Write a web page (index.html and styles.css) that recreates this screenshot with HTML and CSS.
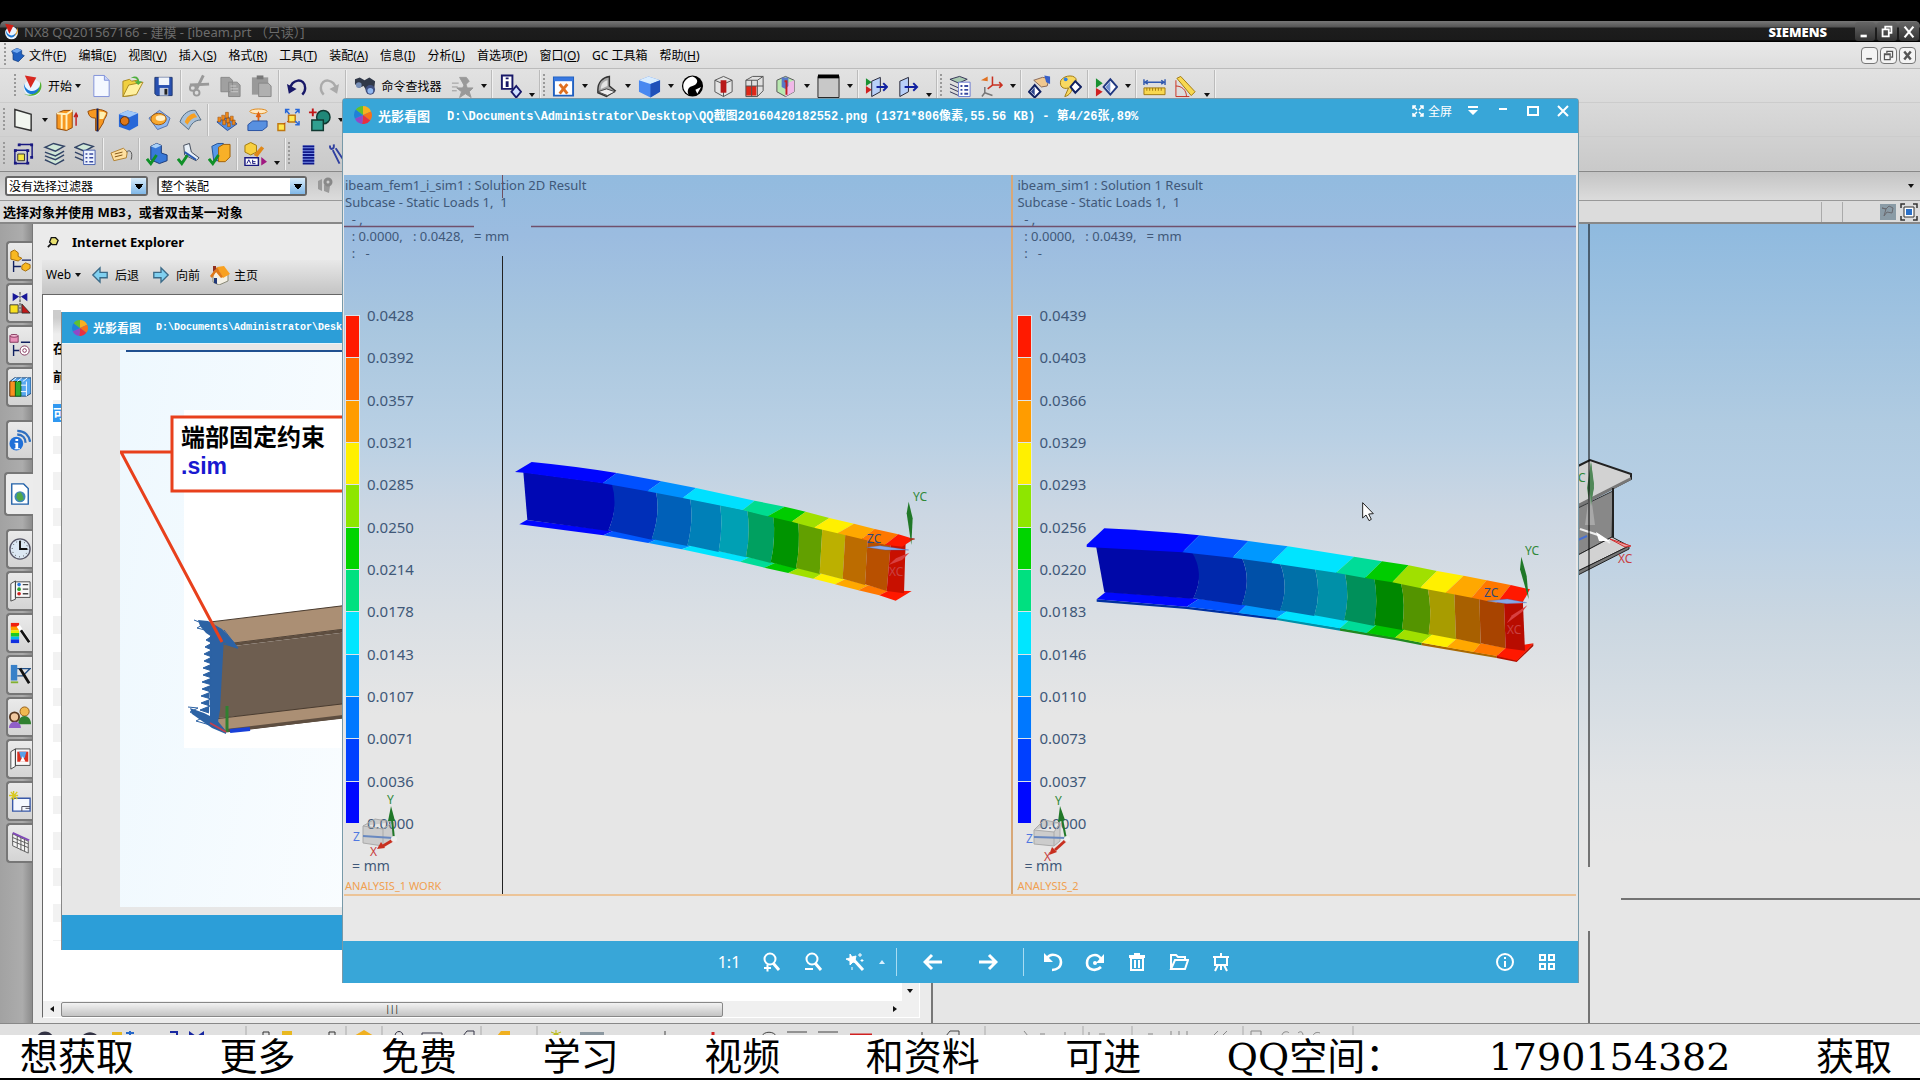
FILE: index.html
```html
<!DOCTYPE html>
<html lang="zh-CN">
<head>
    <meta charset="UTF-8">
    <meta name="viewport" content="width=device-width, initial-scale=1.0">
    <title>NX8 - ibeam.prt</title>
    <link rel="stylesheet" href="styles.css">
</head>
<body>
<div class="app">
    <header class="titlebar">
        <svg class="logo" viewBox="0 0 24 24"><circle cx="12" cy="14" r="9" fill="#e8f4ff"/><path d="M4 18c8 4 17-2 16-12 4 9-5 18-16 12z" fill="#f0a020"/><path d="M4 10c2 8 10 10 14 4-1 9-14 9-14-4z" fill="#1878d8"/><path d="M3 1l12 2-6 12z" fill="#d02018"/></svg>
        <span class="app-name">NX8 QQ201567166 - 建模 - [ibeam.prt （只读）]</span>
        <span class="brand">SIEMENS</span>
        <div class="win-buttons">
            <button aria-label="最小化"><svg viewBox="0 0 18 18"><path d="M4 12h7v3H4z" fill="#fff"/></svg></button>
            <button aria-label="还原"><svg viewBox="0 0 18 18"><path d="M7 6V3h7v7h-3M4 6h7v8H4z" fill="none" stroke="#fff" stroke-width="2"/></svg></button>
            <button aria-label="关闭"><svg viewBox="0 0 18 18"><path d="M4 3l10 12M14 3L4 15" stroke="#fff" stroke-width="2.4"/></svg></button>
        </div>
    </header>

    <nav class="menubar">
        <i class="grip"></i>
        <svg class="menu-logo" viewBox="0 0 24 24"><path d="M4 6l8-4 7 3v6l4 2-9 9-8-3V11z" fill="#2060c0" stroke="#103878"/><path d="M4 6l8-4 7 3-7 4z" fill="#70a8f0"/></svg>
        <a href="#">文件(<u>F</u>)</a>
        <a href="#">编辑(<u>E</u>)</a>
        <a href="#">视图(<u>V</u>)</a>
        <a href="#">插入(<u>S</u>)</a>
        <a href="#">格式(<u>R</u>)</a>
        <a href="#">工具(<u>T</u>)</a>
        <a href="#">装配(<u>A</u>)</a>
        <a href="#">信息(<u>I</u>)</a>
        <a href="#">分析(<u>L</u>)</a>
        <a href="#">首选项(<u>P</u>)</a>
        <a href="#">窗口(<u>O</u>)</a>
        <a href="#">GC 工具箱</a>
        <a href="#">帮助(<u>H</u>)</a>
        <div class="mdi-buttons">
            <button aria-label="最小化文档"><svg viewBox="0 0 16 16"><path d="M4 11h7v2H4z" fill="#555"/></svg></button>
            <button aria-label="还原文档"><svg viewBox="0 0 16 16"><path d="M6 5V3h7v7h-2M3 6h7v7H3zM3 7h7" fill="none" stroke="#555" stroke-width="1.5"/></svg></button>
            <button aria-label="关闭文档"><svg viewBox="0 0 16 16"><path d="M4 3l8 10M12 3L4 13" stroke="#555" stroke-width="3"/></svg></button>
        </div>
    </nav>

    <div class="toolbars">
        <div class="toolbar first">
            <i class="grip"></i>
            <button class="tool start"><svg viewBox="0 0 24 24"><circle cx="12" cy="14" r="9" fill="#e8f4ff"/><path d="M3 20c9 4 18-4 17-13 5 9-5 20-17 13z" fill="#50b030"/><path d="M3 9c2 9 11 11 16 4-1 10-16 11-16-4z" fill="#1878d8"/><path d="M4 1l12 2-6 11z" fill="#d82820"/></svg>开始<b class="arrow"></b></button>
            <button class="tool" aria-label="新建"><svg viewBox="0 0 24 24"><path d="M4 1h11l5 5v17H4z" fill="#f4f8ff" stroke="#8090d8"/><path d="M15 1v5h5" fill="#c8d4f8" stroke="#8090d8"/></svg></button>
            <button class="tool" aria-label="打开"><svg viewBox="0 0 24 24"><path d="M2 7l7-2 2 2 6-1v5l-5 11-10 1z" fill="#f0d040" stroke="#a88820"/><path d="M2 23l6-12 15-3-7 13z" fill="#fff0a0" stroke="#a88820"/><path d="M10 4c5-4 9-1 9 3h3l-4 4-4-4h3c0-3-3-4-7-3z" fill="#50b040"/></svg></button>
            <button class="tool" aria-label="保存"><svg viewBox="0 0 24 24"><path d="M3 3h18v19H5l-2-2z" fill="#2850b0" stroke="#203870"/><path d="M7 3h11v8H7z" fill="#f0f4fa"/><path d="M8 14h9v8H8z" fill="#c8d0e0"/><path d="M13 15h3v6h-3z" fill="#222"/></svg></button>
            <i class="sep"></i>
            <button class="tool" aria-label="剪切"><svg viewBox="0 0 24 24"><path d="M16 1L9 15M2 11l20-1" stroke="#999" stroke-width="3"/><circle cx="5" cy="14" r="3" fill="none" stroke="#999" stroke-width="2"/><circle cx="9" cy="19" r="3" fill="none" stroke="#999" stroke-width="2"/></svg></button>
            <button class="tool" aria-label="复制"><svg viewBox="0 0 24 24"><path d="M2 3h9l3 3v12H2zM10 8h9l3 3v12H10z" fill="#a0a0a0" stroke="#888"/><path d="M12 12h6m-6 3h8m-8 3h8" stroke="#ccc"/></svg></button>
            <button class="tool" aria-label="粘贴"><svg viewBox="0 0 24 24"><path d="M2 3h17v18H2z" fill="#999"/><path d="M7 1h7v4H7z" fill="#777"/><path d="M9 9h10l3 3v11H9z" fill="#b0b0b0" stroke="#888"/></svg></button>
            <i class="sep"></i>
            <button class="tool" aria-label="撤消"><svg viewBox="0 0 24 24"><path d="M4 16C5 4 20 3 20 14c0 3-1 5-3 7" fill="none" stroke="#181868" stroke-width="2.5"/><path d="M1 10l2 10 8-5z" fill="#181868"/></svg></button>
            <button class="tool" aria-label="重做"><svg viewBox="0 0 24 24"><path d="M20 16C19 4 4 3 4 14c0 3 1 5 3 7" fill="none" stroke="#aaa" stroke-width="2.5"/><path d="M23 10l-2 10-8-5z" fill="#aaa"/></svg></button>
            <i class="sep"></i>
            <button class="tool finder"><svg viewBox="0 0 24 24"><path d="M1 5l5-2 5 3 5-3 6 4-1 9-6 4-5-8-5 2-4-4z" fill="#303848"/><circle cx="17" cy="16" r="5" fill="#405080"/><circle cx="17" cy="17" r="3" fill="#90b8f0"/><circle cx="5" cy="11" r="3" fill="#7890b8"/></svg>命令查找器</button>
            <button class="tool" aria-label="收藏"><svg viewBox="0 0 24 24"><path d="M9 3h7l3 4-5 5zM15 9l2 5h6l-4 4 2 6-6-4-6 4 2-6-5-4h6zM1 9h7M1 13h6M1 17h5" fill="#999" stroke="#999"/></svg></button>
            <b class="arrow"></b>
            <i class="sep"></i>
            <button class="tool" aria-label="信息"><svg viewBox="0 0 24 24"><path d="M3 1h11v14H3z" fill="#fff" stroke="#181868" stroke-width="2"/><path d="M7 3h3v2H7zM7 7h3v6H7z" fill="#181868"/><path d="M13 18l5-6 5 6-5 6z" fill="#d0e0ff" stroke="#181868" stroke-width="2"/></svg></button>
            <b class="arrow low"></b>
            <i class="sep"></i><i class="grip"></i>
            <button class="tool" aria-label="适合窗口"><svg viewBox="0 0 24 24"><path d="M2 3h20v19H2z" fill="#fff" stroke="#2060c0" stroke-width="2"/><path d="M2 3h20v4H2z" fill="#3878e0"/><path d="M8 10l8 10M16 10L8 20" stroke="#e07020" stroke-width="3"/></svg></button>
            <b class="arrow"></b>
            <button class="tool" aria-label="渲染"><svg viewBox="0 0 24 24"><path d="M3 16C3 8 8 3 15 2v10l6 5-9 6-9-4z" fill="#a8a8a8" stroke="#333" stroke-width="1.5"/><path d="M6 15c0-5 3-8 7-9v6z" fill="#e4e4e4"/><path d="M3 18l9-3 9 3-8 4z" fill="#eee" stroke="#444"/></svg></button>
            <b class="arrow"></b>
            <button class="tool" aria-label="着色"><svg viewBox="0 0 24 24"><path d="M1 6l10-4 12 4v12l-10 6-12-6z" fill="#4888f0"/><path d="M1 6l10-4 12 4-10 4z" fill="#d8ecff"/><path d="M13 10l10-4v12l-10 6z" fill="#2050b8"/></svg></button>
            <b class="arrow"></b>
            <button class="tool" aria-label="球面"><svg viewBox="0 0 24 24"><circle cx="12" cy="12" r="11" fill="#000"/><path d="M12 2c8 3 5 9 0 10s-6 6-4 9c-9-5-7-17 4-19zM15 16l6-3-4 7z" fill="#fff"/></svg></button>
            <button class="tool" aria-label="截面"><svg viewBox="0 0 24 24"><path d="M3 6l9-4 9 4v12l-9 5-9-5zM3 6l9 4 9-4M12 10v13" fill="#e4e4e4" stroke="#555"/><path d="M9 6h6v13H9z" fill="#b81818"/></svg></button>
            <button class="tool" aria-label="剪切截面"><svg viewBox="0 0 24 24"><path d="M3 6l7-4h11v15l-6 6H3z" fill="#e0e0e0"/><path d="M3 12h11v10H3z" fill="#e02818"/><path d="M3 6l7-4h11v15l-6 6H3zM3 6h12v17M15 6l6-4M9 6v17M3 12h18" fill="none" stroke="#555"/></svg></button>
            <button class="tool" aria-label="彩色立方"><svg viewBox="0 0 24 24"><path d="M3 6l9-4 9 4v12l-9 5-9-5z" fill="#b8e8b0" stroke="#555"/><path d="M12 10l9-4v12l-9 5z" fill="#f0b8e8"/><path d="M8 3h7v9l-3 3-4-2z" fill="#5878c8"/><path d="M11 7h2v14" fill="none" stroke="#c02020" stroke-width="2"/></svg></button>
            <b class="arrow"></b>
            <button class="tool" aria-label="背景"><svg viewBox="0 0 24 24"><path d="M1 2h22v22H1z" fill="#c8c8c8" stroke="#222"/><path d="M1 0h22v4H1z"/></svg></button>
            <b class="arrow"></b>
            <i class="sep"></i>
            <button class="tool" aria-label="编辑截面"><svg viewBox="0 0 24 24"><path d="M1 4l6 4-6 4z" fill="#189030"/><path d="M1 12l6 4-6 4z" fill="#d02020"/><path d="M7 7l9-4v15l-9 5z" fill="#b8d0f8" stroke="#223"/><path d="M12 13h10M19 9l4 4-4 4" fill="none" stroke="#1020a0" stroke-width="2"/></svg></button>
            <button class="tool" aria-label="剪切工作截面"><svg viewBox="0 0 24 24"><path d="M4 7l9-4v15l-9 5z" fill="#b8d0f8" stroke="#223"/><path d="M9 13h12M18 9l4 4-4 4" fill="none" stroke="#1020a0" stroke-width="2"/></svg></button>
            <b class="arrow low"></b>
            <i class="sep"></i><i class="grip"></i>
            <button class="tool" aria-label="图层"><svg viewBox="0 0 24 24"><path d="M1 5l10-3 8 3-9 4zM1 10l9 4M1 14l9 4M1 18l9 4" fill="#a8c8b0" stroke="#335"/><path d="M10 8h12v15H10z" fill="#fff" stroke="#6878d0"/><path d="M12 12h2m2 0h4m-8 4h2m2 0h4m-8 4h2m2 0h4" stroke="#3848a0" stroke-width="2"/></svg></button>
            <button class="tool" aria-label="坐标系"><svg viewBox="0 0 24 24"><path d="M13 2v9h9M13 11l-5 4M20 8l3 3-3 3" fill="none" stroke="#c83020" stroke-width="1.6"/><path d="M5 13v6l-3 4m3-4l8 3" fill="none" stroke="#777" stroke-width="1.6"/><path d="M1 6l7-4v5z" fill="#e07020"/></svg></button>
            <b class="arrow"></b>
            <i class="sep"></i>
            <button class="tool" aria-label="选择"><svg viewBox="0 0 24 24"><path d="M6 6l9-3 7 1-2 8-6 1z" fill="#f0c890" stroke="#865"/><path d="M17 1l6 1v8l-4-2z" fill="#3860c8"/><path d="M1 18l6-7 6 7-6 6z" fill="#fff" stroke="#102060" stroke-width="2"/><path d="M7 13v9l-4-4z" fill="#304890"/></svg></button>
            <button class="tool" aria-label="对象显示"><svg viewBox="0 0 24 24"><path d="M2 6c4-6 16-6 16 0 0 4-4 3-4 7s-3 9-8 10l4-9c-6 2-10-2-8-8z" fill="#f8d860" stroke="#a07810"/><circle cx="7" cy="5" r="2" fill="#3080e0"/><path d="M12 13l5-6 6 6-6 6z" fill="#fff" stroke="#102060" stroke-width="2"/></svg></button>
            <i class="sep"></i>
            <button class="tool" aria-label="显示隐藏"><svg viewBox="0 0 24 24"><path d="M1 4l7 5-7 5z" fill="#189030"/><path d="M1 14l7 4-7 5z" fill="#d02020"/><path d="M9 13l7-8 7 8-7 8z" fill="#fff" stroke="#203880" stroke-width="2"/><path d="M16 7v12l-5-6z" fill="#7090d0"/></svg></button>
            <b class="arrow"></b>
            <i class="sep"></i>
            <button class="tool" aria-label="测量距离"><svg viewBox="0 0 24 24"><path d="M1 14h22v7H1z" fill="#f8d850" stroke="#a07810"/><path d="M4 14v3m3-3v3m3-3v3m3-3v3m3-3v3m3-3v3" stroke="#a07810"/><path d="M1 8h22M1 5v6M23 5v6M5 6L2 8l3 2M19 6l3 2-3 2" stroke="#3058b0" fill="none" stroke-width="1.5"/></svg></button>
            <button class="tool" aria-label="测量角度"><svg viewBox="0 0 24 24"><path d="M3 4l4-2 15 16-4 4z" fill="#f8d850" stroke="#a07810"/><path d="M2 6v17h14M2 12c6 0 11 4 11 11" fill="none" stroke="#c83020"/></svg></button>
            <b class="arrow low"></b>
            <i class="sep"></i>
        </div>
        <div class="toolbar">
            <i class="grip"></i>
            <button class="tool" aria-label="草图"><svg viewBox="0 0 24 24"><path d="M3 1l17 5v17L3 19z" fill="#f2f6f0" stroke="#333" stroke-width="1.5"/></svg></button>
            <b class="arrow"></b>
            <button class="tool" aria-label="拉伸"><svg viewBox="0 0 24 24"><path d="M2 5l7-3h9v18l-6 3-10-2z" fill="#f89820" stroke="#904808"/><path d="M7 6v15M12 6v16M2 5l10 1 6-4" stroke="#fff0c0" fill="none" stroke-width="2"/><path d="M22 18V6m-2 3l2-4 2 4" fill="none" stroke="#c02020" stroke-width="1.5"/></svg></button>
            <button class="tool" aria-label="回转"><svg viewBox="0 0 24 24"><path d="M2 3c7-3 14-3 20 1-1 7-3 5-4 11l-5 8h-3V10C5 10 3 8 2 3z" fill="#f89820" stroke="#904808"/><path d="M12 0v24" stroke="#102060" stroke-width="2"/><path d="M14 3c4 0 6 1 7 2l-3 6h-4z" fill="#fff0b0"/></svg></button>
            <button class="tool" aria-label="孔"><svg viewBox="0 0 24 24"><path d="M2 6l9-4 11 3v13l-9 5-11-4z" fill="#2868d8"/><path d="M2 6l9-4 11 3-9 4z" fill="#a0c8f8"/><circle cx="8" cy="13" r="4.500" fill="#e07818" stroke="#603008"/></svg></button>
            <button class="tool" aria-label="凸台"><svg viewBox="0 0 24 24"><path d="M1 10l11-8 11 8-3 8-10 4z" fill="#90b8f0" stroke="#5070b0"/><ellipse cx="11" cy="11" rx="8" ry="6" fill="#f8a830" stroke="#a05808"/><ellipse cx="13" cy="10" rx="5" ry="3" fill="#fff0c8"/></svg></button>
            <button class="tool" aria-label="扫掠"><svg viewBox="0 0 24 24"><path d="M1 14C4 5 11 1 17 2l6 10c-7 0-10 4-13 10z" fill="#a8c0d8" stroke="#506880"/><path d="M9 17c2-5 6-8 10-8l-3-4c-5 1-8 4-10 9z" fill="#f8a020"/></svg></button>
            <i class="sep"></i>
            <button class="tool" aria-label="阵列"><svg viewBox="0 0 24 24"><path d="M2 14l12-5 9 7-10 7z" fill="#5890e0" stroke="#2850a0"/><path d="M3 9h3v5H3zM7 7h3v5H7zM11 4h3v6h-3zM8 12h3v5H8zM12 10h3v5h-3zM16 8h3v5h-3zM13 15h3v4h-3zM18 12h3v5h-3z" fill="#f08818" stroke="#904808" stroke-width=".5"/></svg></button>
            <button class="tool" aria-label="拔模"><svg viewBox="0 0 24 24"><ellipse cx="13" cy="3" rx="9" ry="2.500" fill="#ffe8c0" stroke="#e08818"/><path d="M13 15V6m-2 3l2-4 2 4" stroke="#e06010" fill="none" stroke-width="1.800"/><path d="M2 17l5-4h15v6l-5 4H2z" fill="#5890e0" stroke="#2850a0"/></svg></button>
            <button class="tool" aria-label="移动"><svg viewBox="0 0 24 24"><path d="M1 16h7v7H1zM12 7h7v7h-7z" fill="#ffe850" stroke="#c07810" stroke-width="1.500"/><path d="M7 16l5-3" stroke="#c04010" stroke-dasharray="2"/><path d="M13 6L9 1m0 4V1h4M19 13l4 4m0-4v4h-4M19 5l4-4m-4 0h4v4" stroke="#2868d8" fill="none" stroke-width="1.500"/></svg></button>
            <button class="tool" aria-label="求和"><svg viewBox="0 0 24 24"><path d="M1 4h8M5 0v8" stroke="#c01818" stroke-width="2"/><circle cx="16" cy="9" r="7" fill="#208878" stroke="#103830" stroke-width="1.500"/><path d="M4 12h12v11H4z" fill="#30a090" stroke="#103830" stroke-width="1.500"/></svg></button>
            <b class="arrow"></b>
        </div>
        <div class="toolbar">
            <i class="grip"></i>
            <button class="tool" aria-label="选择组件"><svg viewBox="0 0 24 24"><path d="M7 2h14v14M3 8h13v14H3z" fill="none" stroke="#181880" stroke-width="1.500"/><path d="M6 12h7v7H6z" fill="#f8e840" stroke="#333"/><path d="M2 7h3v3H2zM15 7h3v3h-3zM2 20h3v3H2zM15 20h3v3h-3zM6 1h3v3H6zM19 1h3v3h-3zM19 14h3v3h-3z" fill="#181880"/></svg></button>
            <button class="tool" aria-label="层设置"><svg viewBox="0 0 24 24"><path d="M2 5l9-4 11 3-9 5zM2 10l11 4 9-5M2 14l11 4 9-5M2 18l11 5 9-5" fill="#d0e8d8" stroke="#346" stroke-width="1.500"/></svg></button>
            <button class="tool" aria-label="层视图"><svg viewBox="0 0 24 24"><path d="M1 5l9-4 10 3-9 5zM1 10l9 4M1 15l9 4" fill="#d0e8d8" stroke="#346" stroke-width="1.500"/><path d="M10 8h12v15H10z" fill="#eef4ff" stroke="#4860b0"/><path d="M12 12h2m2 0h4m-8 4h2m2 0h4m-8 4h2m2 0h4" stroke="#3848a0" stroke-width="1.500"/></svg></button>
            <i class="sep"></i>
            <button class="tool" aria-label="标签"><svg viewBox="0 0 24 24"><path d="M1 11l13-5 4 4-1 6-13 3z" fill="#ffe0a0" stroke="#b08030"/><path d="M5 12l8-2M5 15l8-2" stroke="#805010"/><path d="M17 10c5-4 7 2 5 8" fill="none" stroke="#555"/></svg></button>
            <i class="sep"></i>
            <button class="tool" aria-label="检查几何体"><svg viewBox="0 0 24 24"><path d="M5 4l6-3 5 2v8l6 2v6l-8 3-9-4z" fill="#3878d8" stroke="#183878"/><path d="M5 4l6-3 5 2-6 3z" fill="#a8d0f8"/><path d="M1 17l4 5 6-9" fill="none" stroke="#109028" stroke-width="3"/></svg></button>
            <button class="tool" aria-label="检查部件"><svg viewBox="0 0 24 24"><path d="M7 3l6-2 2 9 8 6-3 3-12-6z" fill="#e8f0f8" stroke="#404858"/><path d="M1 17l4 5 6-9" fill="none" stroke="#109028" stroke-width="3"/><path d="M8 10l12 8" stroke="#2858b0" stroke-width="2"/></svg></button>
            <button class="tool" aria-label="检查装配"><svg viewBox="0 0 24 24"><path d="M4 4l6-3h6v18H6z" fill="#5898e8" stroke="#205098"/><path d="M11 5l5-3h7v13l-5 5h-7z" fill="#f8b028" stroke="#a06008"/><path d="M1 17l4 5 6-9" fill="none" stroke="#109028" stroke-width="3"/></svg></button>
            <i class="sep"></i>
            <button class="tool" aria-label="重命名"><svg viewBox="0 0 24 24"><path d="M1 3l6-3 6 3v7l-6 3-6-3z" fill="#f8d040" stroke="#a07808"/><path d="M10 13l8-9 3 2-7 9z" fill="#e08818"/><path d="M1 16h14v8H1z" fill="#fff" stroke="#181880" stroke-width="1.500"/><path d="M3 22l2-4 2 4m2-4v4h3m-3-2h3" stroke="#181880" fill="none"/><path d="M18 15l6 5-6 4z" fill="#a01880"/></svg></button>
            <b class="arrow low"></b>
            <i class="sep"></i><i class="grip"></i>
            <button class="tool" aria-label="弹簧"><svg viewBox="0 0 24 24"><path d="M6 3h12v19H6z" fill="#7890e8"/><path d="M6 4h12M6 7h12M6 10h12M6 13h12M6 16h12M6 19h12M6 22h12" stroke="#101888" stroke-width="2"/></svg></button>
            <button class="tool" aria-label="螺纹"><svg viewBox="0 0 24 24"><path d="M2 3c0 6 5 4 4-1M5 8l7 14M8 6l8 12" stroke="#3040a0" stroke-width="2" fill="none"/></svg></button>
        </div>
    </div>

    <div class="filterbar">
        <label class="combo filter-type"><select aria-label="类型过滤器"><option>没有选择过滤器</option></select></label>
        <label class="combo filter-scope"><select aria-label="选择范围"><option>整个装配</option></select></label>
        <svg class="gears" viewBox="0 0 18 18"><path d="M2 4l4-2v12l-4-2zM8 8l6 1-1 7-5-2z" fill="#999"/><circle cx="12" cy="5" r="3" fill="none" stroke="#888" stroke-width="3"/></svg>
        <b class="arrow"></b>
    </div>
    <div class="prompt">
        <span>选择对象并使用 MB3，或者双击某一对象</span>
        <div class="status"><i></i><i></i>
            <svg viewBox="0 0 18 18"><path d="M1 1h16v16H1z" fill="#8a9ba6"/><path d="M3 5l4 1 3-3 4 2-1 5-5-1-3 4 2-7z" fill="none" stroke="#6a6a70"/></svg>
            <svg viewBox="0 0 18 18"><path d="M1 5V1h4M13 1h4v4M17 13v4h-4M5 17H1v-4" fill="none" stroke="#333" stroke-width="1.500"/><path d="M4 4h10v10H4z" fill="#fff" stroke="#333"/><path d="M6 6h6v6H6z" fill="#2a70c8"/></svg>
        </div>
    </div>

    <main class="workspace">
        <aside class="tabs">
            <button aria-label="装配导航器"><svg viewBox="0 0 24 24"><path d="M2 2l4-2 4 3v4l4 2-4 3-8-2z" fill="#f8b820" stroke="#a06808"/><path d="M5 12v12M5 18h8M14 11h10" stroke="#102060" stroke-width="1.500"/><path d="M14 17l4-3 5 2v4l-5 3-4-2z" fill="#f8b820" stroke="#a06808"/></svg></button>
            <button aria-label="约束导航器"><svg viewBox="0 0 24 24"><path d="M4 1v9l7-5zM20 1v9l-7-5z" fill="#181898"/><path d="M12 0v24" stroke="#222" stroke-dasharray="3 1"/><path d="M1 14h9v9H1z" fill="#f8e020" stroke="#333"/><path d="M14 13v10h9z" fill="#c01818" stroke="#333"/></svg></button>
            <button aria-label="部件导航器"><svg viewBox="0 0 24 24"><path d="M1 2h9v7H1z" fill="#e890b8" stroke="#803058"/><ellipse cx="5.500" cy="2" rx="4.500" ry="1.500" fill="#f8c0d8" stroke="#803058"/><path d="M5 12v12M5 18h6M13 9h10" stroke="#102060" stroke-width="1.500"/><circle cx="17" cy="18" r="5" fill="#fff" stroke="#803058"/><circle cx="17" cy="18" r="2" fill="none" stroke="#803058"/></svg></button>
            <button aria-label="重用库"><svg viewBox="0 0 24 24"><path d="M1 6l5-4h18v17l-5 3H1z" fill="#58a8f0" stroke="#204878"/><path d="M1 6h6v16H1z" fill="#f89020" stroke="#804008"/><path d="M7 6h6v16H7z" fill="#30b030" stroke="#106010"/><path d="M19 6v16M13 10h6M13 17h6M3 6l5-4M9 6l5-4M15 6l5-4" stroke="#fff"/></svg></button>
            <button class="gap" aria-label="HD3D 工具"><svg viewBox="0 0 24 24"><circle cx="8" cy="16" r="7.500" fill="#2070d8"/><path d="M7 11h3v2H7zM6 15h4v6h2v1H6v-1h1v-5H6z" fill="#fff"/><path d="M9 6c6 0 9 4 9 9M9 2c9 0 13 6 14 12" fill="none" stroke="#3070c0" stroke-width="2.500"/></svg></button>
            <button class="gap current" aria-label="Internet Explorer"><svg viewBox="0 0 24 24"><path d="M3 1h13l5 5v17H3z" fill="#fff" stroke="#2060a8" stroke-width="1.500"/><circle cx="12" cy="15" r="6" fill="#4088b8"/><path d="M9 11l4-1 2 4 1 4-5 2-3-4z" fill="#50a848"/></svg></button>
            <button class="gap" aria-label="历史记录"><svg viewBox="0 0 24 24"><circle cx="12" cy="12" r="11" fill="#dce8f4" stroke="#556" stroke-width="1.500"/><path d="M12 3v9h8" stroke="#111" stroke-width="2" fill="none"/><circle cx="12" cy="12" r="8.500" fill="none" stroke="#333" stroke-dasharray="1 3.450"/></svg></button>
            <button aria-label="系统材料"><svg viewBox="0 0 24 24"><path d="M2 4l5-3v20l-5 2zM7 2h16v17H7z" fill="#f8f8f8" stroke="#444"/><circle cx="11" cy="5" r="2" fill="#2878e0"/><circle cx="11" cy="10" r="2" fill="#30a030"/><circle cx="11" cy="15" r="2" fill="#d02020"/><path d="M15 5h6m-6 5h6m-6 5h6" stroke="#444" stroke-width="1.500"/></svg></button>
            <button aria-label="后处理向导"><svg viewBox="0 0 24 24"><path d="M2 1h9v5H2z" fill="#f02010"/><path d="M2 5h9v4H2z" fill="#ff9c00"/><path d="M2 9h9v3H2z" fill="#e8f000"/><path d="M2 12h9v4H2z" fill="#20c820"/><path d="M2 16h9v3H2z" fill="#00b8f0"/><path d="M2 19h9v4H2z" fill="#1030e0"/><path d="M10 4l12 18" stroke="#fff" stroke-width="4"/><path d="M13 9l9 13" stroke="#111" stroke-width="3"/></svg></button>
            <button aria-label="仿真向导"><svg viewBox="0 0 24 24"><path d="M2 1h7v17H2z" fill="#3880c8"/><path d="M9 5h14l-8 8H9" fill="none" stroke="#205088" stroke-width="1.500"/><path d="M12 5l10 16" stroke="#111" stroke-width="3"/><path d="M2 20h8" stroke="#80b030" stroke-width="2"/></svg></button>
            <button aria-label="角色"><svg viewBox="0 0 24 24"><circle cx="17" cy="6" r="5" fill="#f0b850" stroke="#905810"/><path d="M10 20c0-12 14-12 14 0z" fill="#308030"/><circle cx="6" cy="12" r="5" fill="#f0c8a0" stroke="#583820" stroke-width="2"/><path d="M0 24c0-9 13-9 13 0z" fill="#9060c8"/></svg></button>
            <button aria-label="场景"><svg viewBox="0 0 24 24"><path d="M2 4l5-3v19l-5 3zM7 1h16v18H7z" fill="#f8f8f8" stroke="#444"/><path d="M9 4h12v11H9z" fill="#d83020"/><path d="M11 4h8l-2 7h-4z" fill="#58a0e8"/><path d="M12 15l3-6 3 6z" fill="#fff"/></svg></button>
            <button aria-label="新建图纸"><svg viewBox="0 0 24 24"><path d="M4 9h19v14H4z" fill="#f4f8ff" stroke="#3858a8" stroke-width="1.500"/><path d="M14 18h9M14 18v5M18 20h5" stroke="#445"/><path d="M5 1v10M0 6h10M2 2l7 8M9 2L2 10" stroke="#d8c820" stroke-width="1.500"/></svg></button>
            <button aria-label="表格"><svg viewBox="0 0 24 24"><path d="M4 2l17 8v13L4 15z" fill="#f4f4f4" stroke="#555"/><path d="M4 6l17 7M4 10l17 7M9 4v13M13 6v14M17 8v13" stroke="#555"/><path d="M4 1l18 8" stroke="#8048b8" stroke-width="2"/></svg></button>
        </aside>

        <section class="browser">
            <h2><svg viewBox="0 0 14 14"><path d="M5 2h5l3 3-2 5H6L3 7z" fill="#e8e070" stroke="#111" stroke-width="1.500"/><path d="M1 13l4-4" stroke="#111" stroke-width="2"/></svg>Internet Explorer</h2>
            <div class="browser-bar">
                <button>Web<b class="arrow"></b></button>
                <button><svg viewBox="0 0 20 20"><path d="M2 10l8-8v5h8v6h-8v5z" fill="#80d0f0" stroke="#3a6a88" stroke-width="1.500"/></svg>后退</button>
                <button><svg viewBox="0 0 20 20"><path d="M18 10l-8-8v5H2v6h8v5z" fill="#80d0f0" stroke="#3a6a88" stroke-width="1.500"/></svg>向前</button>
                <button class="home"><svg viewBox="0 0 20 20"><path d="M3 10l5-6 10 4v8l-9 4-6-3z" fill="#f4f0e4" stroke="#887"/><path d="M7 2l7-1 6 8-7 4z" fill="#f8a020"/><path d="M0 11L7 2l6 10-2 1-5-6-4 6z" fill="#e07818"/><path d="M4 13h3v6l-3-1z" fill="#203878"/><path d="M3 1h3v3L3 7z" fill="#903020"/></svg>主页</button>
            </div>
            <div class="page">
                <div class="page-body">
                    <div class="strip"><p>在</p><p>前</p><p class="picked">可</p></div>
                    <div class="shot">
                        <div class="shot-title"><svg viewBox="0 0 20 20"><use href="#wheel"/></svg><strong>光影看图</strong><span>D:\Documents\Administrator\Desktop</span></div>
                        <div class="shot-view">
                            <svg class="slide">
                                <path d="M6 1H600" stroke="#205090" stroke-width="2"/>
                                <path d="M64 60h500v200H64z" fill="#fff"/>
                                <path d="M64 260h500v138H64z" fill="#fff"/>
                                <path d="M90 272l540-66v22l-516 65z" fill="#ab8f74" stroke="#4a3c30"/>
                                <path d="M114 293l516-65v5l-516 63z" fill="#5e4e40"/>
                                <path d="M98 289l16 7 516-63v88L98 368z" fill="#6e5e50"/>
                                <path d="M94 369l536-63v12L106 382z" fill="#ab8f74" stroke="#4a3c30"/>
                                <path d="M106 379l524-63v6l-524 60z" fill="#5e4e40"/>
                                <path d="M78 270l10 1 14 8 12 13 4 7-8-3-9-5-6-2-9-6-6-7z" fill="#2c62a4"/>
                                <path d="M90 286h14l-4 74-2 12H90z" fill="#2c62a4"/>
                                <path d="M70 358l14 5 12 6 10 12v3l-14-6-20-14z" fill="#2c62a4"/>
                                <path d="M74 270l10 4-7 4 12 3M68 357l10 1-8 4 12 6-6 3 14 4M104 280l14 18-14-4" fill="none" stroke="#2c62a4"/>
                                <path d="M92 286l-6 4 6 3-7 4 7 3-8 4 8 3-8 4 8 3-9 4 9 3-9 4 9 3-10 4 10 3-10 4 9 3-10 4 10 3-10 4 9 3-10 4 9 3" fill="#2c62a4" stroke="#2c62a4"/>
                                <path d="M107 382v-26" stroke="#308030" stroke-width="3"/>
                                <path d="M110 381l20-2" stroke="#1840d8" stroke-width="4"/>
                                <path d="M106 382l-16-9" stroke="#c04050" stroke-width="2"/>
                                <path d="M51 102H1l101 190" fill="none" stroke="#e8401c" stroke-width="3"/>
                                <path d="M52 67h500v74H52z" fill="#fff" stroke="#e8401c" stroke-width="3"/>
                                <text class="note" x="61" y="96">端部固定约束</text>
                                <text class="note blue" x="61" y="124">.sim</text>
                            </svg>
                        </div>
                        <div class="shot-foot"></div>
                    </div>
                    <div class="vscroll"><b class="arrow"></b></div>
                </div>
                <div class="hscroll"><b class="arrow left"></b><div class="track"><div class="thumb">|||</div></div><b class="arrow right"></b></div>
            </div>
        </section>

        <section class="graphics">
            <svg class="model">
                <path d="M645 242l12-6 41 14v5l-53 27z" fill="#d2d2d2" stroke="#222" stroke-width="2"/>
                <path d="M645 280l53-27v3l-53 28z" fill="#777"/>
                <path d="M645 284l35-17-1 46-34 18z" fill="#888" stroke="#333"/>
                <path d="M680 264v50" stroke="#222" stroke-width="2"/>
                <path d="M645 331l34-18 17 9-51 25z" fill="#d2d2d2" stroke="#222"/>
                <path d="M645 347l51-25v3l-51 26z" fill="#777" stroke="#222"/>
                <path d="M657 284l-3-20 4-26 3 26z" fill="#508858"/>
                <path d="M657 265l-5 36h10z" fill="#a8a8a8"/>
                <path d="M658 238l-2 18 2 26 3-22z" fill="#508858"/>
                <path d="M647 305l18 6 12 8" stroke="#eee" stroke-width="2" fill="none"/>
                <path d="M663 308l14 9-11 0z" fill="#fff"/>
                <path d="M677 315l21 7-6 1z" fill="#f0a0a0" stroke="#d03030"/>
                <path d="M645 316l9-4" stroke="#4870d0" stroke-width="2"/>
                <path d="M656 0v643M656 707v93M688 675h1400" stroke="#000"/>
                <text class="green" x="645" y="258">C</text>
                <text class="red" x="685" y="339">XC</text>
            </svg>
        </section>
    </main>

    <div class="lower-bar">
        <svg viewBox="0 0 1400 12" class="lower-icons">
            <path d="M37 12c4-6 12-6 16 0zM82 12c5-5 11-5 16 0z" fill="#334"/><path d="M112 12v-4h10v4zM282 12v-5h10v5z" fill="#e8b820"/><path d="M130 7v5m-4-3h8" stroke="#2868c8" stroke-width="2"/><path d="M170 8h7v4" stroke="#1828a0" fill="none" stroke-width="2"/><path d="M189 7l7 5h-7zM204 7l-7 5h7z" fill="#1828a0"/><path d="M263 8h6v4h-6zM329 8h6v4h-6z" fill="none" stroke="#333"/>
            <path d="M354 12l10-6 10 6zM497 12l4-5h9v5z" fill="#f0b020"/><path d="M395 12c0-6 8-6 8 0M422 12v-3h20v3M463 12l4-5h7v5" fill="none" stroke="#334"/><path d="M580 12V8h24v4z" fill="#8c98a0"/><path d="M556 6v6m-5-4l10 4m-10 0l10-4" stroke="#b8b810"/><path d="M713 8v4M850 11h22" stroke="#d02020" stroke-width="3"/><path d="M665 7v5M922 8v4M762 12c2-5 12-5 14 0M787 8h20M818 8h20M946 12l4-5h9v5" stroke="#444" fill="none"/>
            <path d="M1024 7l4 5m12-2h5m20-2v4M1089 8v4m10-2h6M1148 10h5m18-3v5m8-5v5m8-5v5M1213 12l5-5m4 5l5-5M1251 12V7h10v5M1282 12c0-5 6-5 7-3m9 0c2-2 5-2 5 3M1313 12c1-4 5-4 7-3" stroke="#888" fill="none"/>
            <path d="M246 2v10M346 2v10M382 2v10M481 2v10M537 2v10M985 2v10M1083 2v10M1132 2v10M1243 2v10M1353 2v10" stroke="#aaa"/>
        </svg>
    </div>
    <footer class="banner">
        <span>想获取</span><span>更多</span><span>免费</span><span>学习</span><span>视频</span><span>和资料</span><span>可进</span><span>QQ空间：</span><span>1790154382</span><span>获取</span>
    </footer>

    <!-- image viewer window -->
    <div class="viewer">
        <div class="viewer-title">
            <svg class="wheel" viewBox="0 0 20 20">
                <g id="wheel"><path d="M10 10L10 0A10 10 0 0 1 19 6z" fill="#f8b020"/><path d="M10 10L19 6A10 10 0 0 1 18 16z" fill="#f87018"/><path d="M10 10L18 16A10 10 0 0 1 9 20z" fill="#e83040"/><path d="M10 10L9 20A10 10 0 0 1 1 14z" fill="#9048c8"/><path d="M10 10L1 14A10 10 0 0 1 2 4z" fill="#2080d8"/><path d="M10 10L2 4A10 10 0 0 1 10 0z" fill="#60c030"/></g>
            </svg>
            <strong>光影看图</strong>
            <span class="path">D:\Documents\Administrator\Desktop\QQ截图20160420182552.png (1371*806像素,55.56 KB) - 第4/26张,89%</span>
            <div class="viewer-controls">
                <button class="full"><svg viewBox="0 0 12 12"><path d="M1 4V1h3M1 1l4 4M8 1h3v3M11 1L7 5M11 8v3H8M11 11L7 7M4 11H1V8M1 11l4-4" fill="none" stroke="#fff" stroke-width="1.500"/></svg>全屏</button>
                <button aria-label="菜单"><svg viewBox="0 0 12 12"><path d="M1 1h10v2H1zM1 5h10l-5 5z" fill="#fff"/></svg></button>
                <button aria-label="最小化"><svg viewBox="0 0 12 12"><path d="M2 3h8v2H2z" fill="#fff"/></svg></button>
                <button aria-label="最大化"><svg viewBox="0 0 12 12"><path d="M1 2h10v8H1z" fill="none" stroke="#fff" stroke-width="2"/></svg></button>
                <button aria-label="关闭"><svg viewBox="0 0 12 12"><path d="M1 1l10 10M11 1L1 11" stroke="#fff" stroke-width="2"/></svg></button>
            </div>
        </div>
        <div class="stage">
            <div class="pane">
                <pre>ibeam_fem1_i_sim1 : Solution 2D Result
Subcase - Static Loads 1,  1
  - ,
  : 0.0000,   : 0.0428,   = mm
  :   -</pre>
                <div class="legend">
                    <div class="scale"><i class="c1"></i><i class="c2"></i><i class="c3"></i><i class="c4"></i><i class="c5"></i><i class="c6"></i><i class="c7"></i><i class="c8"></i><i class="c9"></i><i class="c10"></i><i class="c11"></i><i class="c12"></i></div>
                    <div class="values"><span>0.0428</span><span>0.0392</span><span>0.0357</span><span>0.0321</span><span>0.0285</span><span>0.0250</span><span>0.0214</span><span>0.0178</span><span>0.0143</span><span>0.0107</span><span>0.0071</span><span>0.0036</span><span>0.0000</span></div>
                </div>
                <p class="unit">= mm</p>
                <p class="pane-name">ANALYSIS_1 WORK</p>
            </div>
            <div class="pane">
                <pre>ibeam_sim1 : Solution 1 Result
Subcase - Static Loads 1,  1
  - ,
  : 0.0000,   : 0.0439,   = mm
  :   -</pre>
                <div class="legend">
                    <div class="scale"><i class="c1"></i><i class="c2"></i><i class="c3"></i><i class="c4"></i><i class="c5"></i><i class="c6"></i><i class="c7"></i><i class="c8"></i><i class="c9"></i><i class="c10"></i><i class="c11"></i><i class="c12"></i></div>
                    <div class="values"><span>0.0439</span><span>0.0403</span><span>0.0366</span><span>0.0329</span><span>0.0293</span><span>0.0256</span><span>0.0220</span><span>0.0183</span><span>0.0146</span><span>0.0110</span><span>0.0073</span><span>0.0037</span><span>0.0000</span></div>
                </div>
                <p class="unit">= mm</p>
                <p class="pane-name">ANALYSIS_2</p>
            </div>
            <svg class="drawing">
                <path d="M0 51.500h130M187 51.500h1800" stroke="#70506c" stroke-width="1.500"/>
                <path d="M158.500 0v23" stroke="#705060"/>
                <path d="M158.500 81v639" stroke="#222"/>

                <!-- left beam -->
                <svg x="156" y="265" width="460" height="180" viewBox="0 0 1380 540">
                    <path d="M80 240L340 272 310 286 58 253z" fill="#0005ff"/>
                    <path d="M340 272L470 298 445 309 310 286z" fill="#0058ff"/>
                    <path d="M470 298L575 317 545 328 445 309z" fill="#0098ff"/>
                    <path d="M575 317L748 352 720 365 545 328z" fill="#00e4ff"/>
                    <path d="M748 352L825 369 793 383 720 365z" fill="#00dc98"/>
                    <path d="M825 369L895 384 865 399 793 383z" fill="#00c800"/>
                    <path d="M895 384L965 401 940 416 865 399z" fill="#a0e000"/>
                    <path d="M965 401L1035 418 1005 433 940 416z" fill="#fff000"/>
                    <path d="M1035 418L1105 436 1075 451 1005 433z" fill="#ffa800"/>
                    <path d="M1105 436L1165 452 1138 466 1075 451z" fill="#ff7800"/>
                    <path d="M1165 452L1235 453 1187 482 1138 466z" fill="#ff1800"/>
                    <path d="M70 96L342 133Q356 200 325 273L82 240z" fill="#0008b4"/>
                    <path d="M335 130L468 155Q482 220 455 299L325 271Q356 200 335 130z" fill="#002fb8"/>
                    <path d="M468 155L570 176Q582 240 562 318L455 297Q482 220 468 155z" fill="#0060b8"/>
                    <path d="M570 176L660 194Q670 260 656 336L562 316Q582 240 570 176z" fill="#0080b8"/>
                    <path d="M660 194L742 212Q752 280 738 352L656 334Q670 260 660 194z" fill="#00a0b4"/>
                    <path d="M742 212L820 230Q828 300 812 369L738 350Q752 280 742 212z" fill="#00a060"/>
                    <path d="M820 230L895 247Q901 320 888 386L812 367Q828 300 820 230z" fill="#009400"/>
                    <path d="M895 247L967 266 959 402 888 384Q901 320 895 247z" fill="#62a000"/>
                    <path d="M967 266L1036 282 1028 418 959 400z" fill="#bcb000"/>
                    <path d="M1036 282L1103 298 1095 435 1028 416z" fill="#bc6c00"/>
                    <path d="M1103 298L1172 314 1160 453 1095 433z" fill="#b85000"/>
                    <path d="M1172 314L1217 304 1212 460 1160 453z" fill="#c81000"/>
                    <path d="M95 66Q220 78 350 99L308 130 72 98 45 96z" fill="#0005ff"/>
                    <path d="M350 99L484 124 442 154 308 130z" fill="#0050ff"/>
                    <path d="M484 124L588 144 548 174 442 154z" fill="#0090ff"/>
                    <path d="M588 144L764 182 728 210 548 174z" fill="#00e0ff"/>
                    <path d="M764 182L854 200 803 229 728 210z" fill="#00dc90"/>
                    <path d="M854 200L917 215 875 245 803 229z" fill="#00cc00"/>
                    <path d="M917 215L988 234 942 263 875 245z" fill="#a0e000"/>
                    <path d="M988 234L1062 251 1013 280 942 263z" fill="#fff000"/>
                    <path d="M1062 251L1124 267 1085 297 1013 280z" fill="#ffa800"/>
                    <path d="M1124 267L1195 283 1155 314 1085 297z" fill="#ff7800"/>
                    <path d="M1195 283L1242 297 1206 320 1155 314z" fill="#ff1800"/>
                    <path d="M1226 185l-6 35 14 95 4-80z" fill="#207828"/>
                    <path d="M1100 322l40-5 86 13-70 0z" fill="#88a8e8" stroke="#4060b0"/>
                    <path d="M1228 338l-40 17-22 20 40-15z" fill="#d84040"/>
                    <path d="M1228 297l16 0" stroke="#a03020" stroke-width="4"/>
                </svg>
                <text class="green" x="569" y="326">YC</text>
                <text class="navy" x="523" y="368">ZC</text>
                <text class="red" x="545" y="401">XC</text>

                <!-- right beam -->
                <svg x="716" y="325" width="500" height="180" viewBox="0 0 1500 540">
                    <path d="M110 298L380 320 535 338 650 352V360L535 346 380 327 110 305z" fill="#0030a0"/>
                    <path d="M650 352L840 384V392L650 360z" fill="#0090a8"/>
                    <path d="M840 384L1005 412 1085 428V436L1005 420 840 392z" fill="#208820"/>
                    <path d="M1085 428L1310 467V474L1085 436z" fill="#a86800"/>
                    <path d="M1310 466L1370 480 1420 430V438L1370 486 1310 474z" fill="#b01000"/>
                    <path d="M138 275L417 296 380 320 110 298z" fill="#0008ff"/>
                    <path d="M417 296L560 314 535 339 380 320z" fill="#0050ff"/>
                    <path d="M560 314L685 331 650 354 535 339z" fill="#0098ff"/>
                    <path d="M685 331L868 360 840 385 650 354z" fill="#00e4ff"/>
                    <path d="M868 360L950 374 920 399 840 385z" fill="#00dc98"/>
                    <path d="M950 374L1035 388 1005 413 920 399z" fill="#00c800"/>
                    <path d="M1035 388L1118 403 1085 428 1005 413z" fill="#a0e000"/>
                    <path d="M1118 403L1190 416 1160 442 1085 428z" fill="#fff000"/>
                    <path d="M1190 416L1262 430 1240 456 1160 442z" fill="#ffa800"/>
                    <path d="M1262 430L1338 443 1310 468 1240 456z" fill="#ff7800"/>
                    <path d="M1338 443L1420 430 1370 482 1310 468z" fill="#ff1800"/>
                    <path d="M108 138L400 152Q436 220 400 296L133 277z" fill="#0008a8"/>
                    <path d="M395 155L545 172Q576 240 545 316L400 295Q436 220 395 155z" fill="#0028ac"/>
                    <path d="M545 172L660 190Q688 260 660 333L545 314Q576 240 545 172z" fill="#0050a8"/>
                    <path d="M660 190L765 205Q785 280 763 348L660 331Q688 260 660 190z" fill="#0070a8"/>
                    <path d="M765 205L855 220Q870 290 853 362L763 346Q785 280 765 205z" fill="#0090a8"/>
                    <path d="M855 220L943 235Q955 300 943 378L853 360Q870 290 855 220z" fill="#00905a"/>
                    <path d="M943 235L1023 248Q1038 310 1026 390L943 375Q955 300 943 235z" fill="#008800"/>
                    <path d="M1023 248L1103 263Q1117 330 1106 404L1026 388Q1038 310 1023 248z" fill="#549400"/>
                    <path d="M1103 263L1183 279 1188 418 1106 402Q1117 330 1103 263z" fill="#a89c00"/>
                    <path d="M1183 279L1258 294 1262 432 1188 416z" fill="#a86000"/>
                    <path d="M1258 294L1332 308 1337 445 1262 430z" fill="#a84400"/>
                    <path d="M1332 308L1388 292 1395 452 1337 445z" fill="#b80c00"/>
                    <path d="M133 85Q280 92 418 106L367 157 80 141V134z" fill="#0008ff"/>
                    <path d="M418 106L565 123 517 173 367 157z" fill="#0050ff"/>
                    <path d="M565 123L684 139 633 189 517 173z" fill="#0098ff"/>
                    <path d="M684 139L882 170 828 218 633 189z" fill="#00e4ff"/>
                    <path d="M882 170L966 184 915 234 828 218z" fill="#00dc98"/>
                    <path d="M966 184L1046 196 997 247 915 234z" fill="#00cc00"/>
                    <path d="M1046 196L1131 213 1080 264 997 247z" fill="#a0e000"/>
                    <path d="M1131 213L1211 227 1157 278 1080 264z" fill="#fff000"/>
                    <path d="M1211 227L1280 241 1235 293 1157 278z" fill="#ffa800"/>
                    <path d="M1280 241L1352 255 1310 309 1235 293z" fill="#ff7800"/>
                    <path d="M1352 255L1410 268 1385 312 1310 309z" fill="#ff1800"/>
                    <path d="M1384 170l-4 38 26 90-6-70z" fill="#207828"/>
                    <path d="M1282 303l60-6 58 11-60 3z" fill="#88a8e8" stroke="#4060b0"/>
                    <path d="M1402 316l-46 30-16 24 46-34z" fill="#d84040"/>
                    <path d="M908 8v46l10-9 9 17 7-4-8-16 14-1z" fill="#fff" stroke="#222" stroke-width="3"/>
                </svg>
                <text class="green" x="1181" y="380">YC</text>
                <text class="navy" x="1140" y="422">ZC</text>
                <text class="red" x="1163" y="459">XC</text>

                <!-- view triads -->
                <path d="M19 651l12-7 18 3v19l-10 5-20-3zM19 651l20 3 10-7M39 654v17" fill="#9995" stroke="#aaa"/>
                <path d="M50 664l-2-20" stroke="#207828" stroke-width="2"/><path d="M47 631l4 15h-7z" fill="#207828"/>
                <path d="M49 663l-30-2" stroke="#6888c0" stroke-width="2"/>
                <path d="M49 665l-10 6" stroke="#c83020" stroke-width="3"/><path d="M33 674l4-7 4 6z" fill="#c83020"/>
                <circle cx="50" cy="664" r="3" fill="#eee"/>
                <text class="green" x="43" y="629">Y</text><text class="blue" x="9" y="666">Z</text><text class="red" x="26" y="681">X</text>
                <path d="M690 655l10-10 16 3v18l-6 5-20-2zM690 655l20 2 6-9M710 657v14" fill="#9995" stroke="#aaa"/>
                <path d="M722 664l-4-20" stroke="#207828" stroke-width="2"/><path d="M716 631l5 14-7 2z" fill="#207828"/>
                <path d="M722 663l-32-1" stroke="#6888c0" stroke-width="2"/>
                <path d="M722 665l-11 10" stroke="#c83020" stroke-width="3"/><path d="M705 680l3-8 5 5z" fill="#c83020"/>
                <circle cx="723" cy="664" r="3" fill="#eee"/>
                <text class="green" x="711" y="630">Y</text><text class="blue" x="682" y="668">Z</text><text class="red" x="700" y="686">X</text>
            </svg>
        </div>
        <div class="viewer-foot">
            <div class="foot-tools">
                <button>1:1</button>
                <button aria-label="放大"><svg viewBox="0 0 20 20"><circle cx="9" cy="7" r="5.500" fill="none" stroke="#fff" stroke-width="2"/><path d="M12 11l6 7" stroke="#fff" stroke-width="3"/><path d="M3 16h7M6.500 12.500v7" stroke="#fff" stroke-width="2"/></svg></button>
                <button aria-label="缩小"><svg viewBox="0 0 20 20"><circle cx="9" cy="7" r="5.500" fill="none" stroke="#fff" stroke-width="2"/><path d="M12 11l6 7" stroke="#fff" stroke-width="3"/><path d="M2 17h8" stroke="#fff" stroke-width="2"/></svg></button>
                <button aria-label="美化"><svg viewBox="0 0 20 20"><path d="M8 7l10 11" stroke="#fff" stroke-width="3"/><path d="M5 2l2 3 4-1-1 4 2 3-4-1-3 3 0-4-4-2 4-1zM15 1v4M13 3h4M17 7v3M15.500 8.500h3M7 15v3" fill="#fff" stroke="#fff"/></svg></button>
                <b class="arrow up"></b>
                <i class="line"></i>
                <button class="wide" aria-label="上一张"><svg viewBox="0 0 20 20"><path d="M19 10H2M9 3l-7 7 7 7" fill="none" stroke="#fff" stroke-width="3"/></svg></button>
                <button class="wide" aria-label="下一张"><svg viewBox="0 0 20 20"><path d="M1 10h17M11 3l7 7-7 7" fill="none" stroke="#fff" stroke-width="3"/></svg></button>
                <i class="line"></i>
                <button aria-label="逆时针旋转"><svg viewBox="0 0 20 20"><path d="M4 6c4-6 14-3 14 4 0 5-4 8-9 8" fill="none" stroke="#fff" stroke-width="2.600"/><path d="M1 1v9h9z" fill="#fff"/></svg></button>
                <button aria-label="顺时针旋转"><svg viewBox="0 0 20 20"><path d="M16 7C12 0 2 3 2 11c0 7 9 9 14 4" fill="none" stroke="#fff" stroke-width="2.600"/><path d="M19 2v9h-8z" fill="#fff"/><circle cx="10" cy="11" r="2" fill="#fff"/></svg></button>
                <button aria-label="删除"><svg viewBox="0 0 20 20"><path d="M2 3h16v3H2zM7 1h6v2H7z" fill="#fff"/><path d="M4 6h12v12H4zM8 8v8M12 8v8" fill="none" stroke="#fff" stroke-width="2"/></svg></button>
                <button aria-label="打开文件"><svg viewBox="0 0 20 20"><path d="M2 17V3h5l2 2h7v3M2 17l4-9h13l-3 9z" fill="none" stroke="#fff" stroke-width="2"/></svg></button>
                <button aria-label="幻灯片"><svg viewBox="0 0 20 20"><path d="M2 5h16M4 5v8h12V5M10 1v4M7 13l-3 6M13 13l3 6M10 13v5" fill="none" stroke="#fff" stroke-width="2"/></svg></button>
            </div>
            <div class="foot-right">
                <button aria-label="图片信息"><svg viewBox="0 0 20 20"><circle cx="10" cy="10" r="8" fill="none" stroke="#fff" stroke-width="2"/><path d="M9 5h2v2H9zM9 9h2v6H9z" fill="#fff"/></svg></button>
                <button aria-label="缩略图"><svg viewBox="0 0 20 20"><path d="M3 3h5v5H3zM12 3h5v5h-5zM3 12h5v5H3zM12 12h5v5h-5z" fill="none" stroke="#fff" stroke-width="2"/></svg></button>
            </div>
        </div>
    </div>
</div>
</body>
</html>
```
FILE: styles.css
```css
* {
    box-sizing: border-box;
}
body {
    margin: 0;
    background: #000;
    color: #000;
    font-family: "Noto Sans", "Noto Sans CJK SC", sans-serif;
    font-size: 12px;
}
button, select {
    font: inherit;
    color: inherit;
}
button {
    padding: 0;
    border: none;
    background: none;
    display: flex;
    align-items: center;
    justify-content: center;
    white-space: nowrap;
}
a {
    color: inherit;
    text-decoration: none;
}
p, h2, pre {
    margin: 0;
}
svg {
    flex: none;
}
.app {
    position: relative;
    display: flex;
    flex-direction: column;
    height: 100vh;
    padding: 21px 0 2px;
    overflow: hidden;
}

/* title and menu */
.titlebar {
    display: flex;
    align-items: center;
    height: 21px;
    flex: none;
    padding-left: 3px;
    background: linear-gradient(#777 0, #555 6px, #1d1d1d 7px, #1a1a1a 19px, #000 20px);
    border-radius: 5px 5px 0 0;
}
.logo {
    width: 17px;
    height: 17px;
}
.app-name {
    margin-left: 4px;
    font-size: 13px;
    line-height: 20px;
    color: #6c6c6c;
}
.brand {
    margin-left: auto;
    margin-right: 28px;
    font-size: 13px;
    line-height: 20px;
    font-weight: 900;
    color: #fff;
}
.win-buttons {
    display: flex;
    gap: 2px;
    padding-right: 1px;
}
.win-buttons button {
    width: 20px;
    height: 19px;
    background: linear-gradient(#666, #333);
    border-radius: 3px;
}
.win-buttons svg {
    width: 16px;
    height: 16px;
}
.menubar {
    display: flex;
    align-items: center;
    gap: 12px;
    height: 27px;
    flex: none;
    padding: 0 4px;
    background: linear-gradient(#e8e8e8, #dedede);
    border-bottom: 1px solid #bbb;
    white-space: nowrap;
}
.menubar .grip {
    margin-right: -12px;
}
.menu-logo {
    width: 16px;
    height: 18px;
    margin-right: -8px;
}
.mdi-buttons {
    display: flex;
    gap: 2px;
    margin-left: auto;
}
.mdi-buttons button {
    width: 17px;
    height: 17px;
    background: #f4f4f4;
    border: 1px solid #777;
    border-radius: 4px;
}
.mdi-buttons svg {
    width: 13px;
    height: 13px;
}

/* toolbars */
.toolbars {
    flex: none;
    background: linear-gradient(#e2e2e2, #c9c9c9);
    border-bottom: 1px solid #888;
}
.toolbar {
    display: flex;
    align-items: center;
    height: 34px;
    padding-left: 3px;
    border-bottom: 1px solid #ccc;
    white-space: nowrap;
}
.toolbar.first {
    padding-left: 14px;
}
.grip {
    width: 5px;
    height: 24px;
    flex: none;
    background: repeating-linear-gradient(#999 0, #999 2px, transparent 2px, transparent 4px) 0 0 / 2px 24px no-repeat;
}
.tool {
    width: 31px;
    height: 30px;
    flex: none;
    gap: 4px;
}
.tool svg {
    width: 23px;
    height: 24px;
}
.tool.start {
    width: 67px;
}
.tool.finder {
    width: 98px;
}
.arrow {
    position: relative;
    width: 12px;
    height: 4px;
    flex: none;
}
.arrow::before {
    content: "";
    display: block;
    width: 0;
    margin: 0 auto;
    border: 3px solid transparent;
    border-top: 4px solid #111;
    border-bottom: none;
}
.start .arrow {
    margin-left: -4px;
}
.arrow.low {
    margin-top: 18px;
}
.arrow.left::before {
    border: 3px solid transparent;
    border-right: 4px solid #111;
    border-left: none;
}
.arrow.right::before {
    border: 3px solid transparent;
    border-left: 4px solid #111;
    border-right: none;
}
.arrow.up::before {
    border: 3px solid transparent;
    border-bottom: 4px solid #d8f0ff;
    border-top: none;
}
.sep {
    width: 2px;
    height: 32px;
    flex: none;
    margin: 0 2px 0 1px;
    border-left: 1px solid #bbb;
    border-right: 1px solid #f0f0f0;
}
.filterbar {
    display: flex;
    align-items: center;
    gap: 9px;
    height: 29px;
    flex: none;
    padding: 0 3px 0 5px;
    background: linear-gradient(#c4c4c4, #dcdcdc);
    border-bottom: 1px solid #999;
}
.filterbar > .arrow {
    margin-left: auto;
}
.combo {
    position: relative;
    display: flex;
    height: 20px;
}
.combo select {
    width: 100%;
    padding: 0 2px;
    appearance: none;
    background: #fff;
    border: 2px solid #666;
    border-radius: 3px;
    outline: none;
}
.combo::after {
    content: "";
    position: absolute;
    top: 2px;
    right: 2px;
    width: 15px;
    height: 16px;
    background: linear-gradient(#000, #000) 4px 6px / 8px 1px no-repeat, linear-gradient(#000, #000) 5px 7px / 6px 2px no-repeat, linear-gradient(#000, #000) 6px 9px / 4px 1px no-repeat, linear-gradient(#000, #000) 7px 10px / 2px 1px no-repeat, linear-gradient(#d8ecfa, #80b8e8);
}
.filter-type {
    width: 143px;
}
.filter-scope {
    width: 150px;
}
.gears {
    width: 18px;
    height: 18px;
}
.prompt {
    display: flex;
    align-items: center;
    height: 23px;
    flex: none;
    padding-left: 3px;
    background: #dcdcdc;
    border-bottom: 2px solid #888;
    font-size: 13px;
    font-weight: bold;
    line-height: 20px;
    white-space: nowrap;
}
.status {
    display: flex;
    align-items: center;
    gap: 3px;
    height: 20px;
    margin-left: auto;
    padding-right: 2px;
}
.status i {
    width: 18px;
    height: 20px;
    border-left: 1px solid #aaa;
}
.status i + i {
    width: 34px;
}
.status svg {
    width: 18px;
    height: 18px;
}

/* resource bar */
.workspace {
    display: flex;
    flex: 1;
    min-height: 0;
}
.tabs {
    width: 33px;
    flex: none;
    display: flex;
    flex-direction: column;
    gap: 2px;
    padding: 17px 0 0 6px;
    background: linear-gradient(90deg, #a2a2a2, #acacac 70%, #8c8c8c);
    border-right: 1px solid #777;
}
.tabs button {
    height: 40px;
    flex: none;
    background: linear-gradient(#eaeaea, #d4d4d4);
    border: 2px solid #777;
    border-right: none;
    border-radius: 4px 0 0 4px;
}
.tabs svg {
    width: 22px;
    height: 24px;
}
.tabs .gap {
    margin-top: 11px;
}
.tabs .current {
    height: 44px;
    margin: 10px -1px 0 -2px;
    background: #ececec;
}

/* browser panel */
.browser {
    width: 900px;
    flex: none;
    display: flex;
    flex-direction: column;
    background: #ebebeb;
    padding: 0 11px 5px 9px;
    border-right: 2px solid #777;
}
.browser h2 {
    display: flex;
    align-items: center;
    gap: 13px;
    height: 36px;
    padding-left: 5px;
    font-size: 13px;
}
.browser h2 svg {
    width: 12px;
    height: 12px;
}
.browser-bar {
    display: flex;
    align-items: center;
    gap: 13px;
    height: 34px;
    padding: 0 0 5px 4px;
    background: linear-gradient(#e8e8e8, #c4c4c4);
    font-size: 12px;
}
.browser-bar button {
    gap: 6px;
}
.browser-bar .arrow {
    margin: 0 -6px 0 -5px;
}
.browser-bar svg {
    width: 18px;
    height: 18px;
}
.browser-bar .home {
    gap: 3px;
    margin-left: -4px;
}
.browser-bar .home svg {
    width: 22px;
    height: 20px;
}
.page {
    flex: 1;
    min-height: 0;
    display: flex;
    flex-direction: column;
    background: #fff;
    border: 1px solid #666;
    border-right-color: #fff;
    border-bottom-color: #fff;
}
.page-body {
    flex: 1;
    min-height: 0;
    display: flex;
    padding-left: 10px;
}
.strip {
    width: 8px;
    margin: 15px 0 60px;
    overflow: hidden;
    font-size: 13px;
    font-weight: bold;
    line-height: 28px;
    padding-top: 24px;
    background: linear-gradient(#ccc 8px, #eee 24px, #eee 80px, transparent 80px), repeating-linear-gradient(#fff 0, #fff 18px, #f2f2f2 18px, #f2f2f2 36px);
}
.strip .picked {
    margin-top: 14px;
    line-height: 18px;
    background: #3098f0;
    color: #fff;
}
.shot {
    flex: 1;
    min-width: 0;
    display: flex;
    flex-direction: column;
    margin: 17px 0 51px;
    background: #e7e7e7;
    border-left: 1px solid #888;
}
.shot-title {
    display: flex;
    align-items: center;
    height: 31px;
    flex: none;
    gap: 5px;
    padding-left: 10px;
    background: #2c9ed8;
    color: #fff;
    font-size: 12px;
    white-space: nowrap;
}
.shot-title svg {
    width: 16px;
    height: 16px;
}
.shot-title span {
    margin-left: 10px;
    font: bold 10px "Liberation Mono", "Noto Sans CJK SC", monospace;
}
.shot-view {
    flex: 1;
    min-height: 0;
    display: flex;
    padding: 6px 0 8px 58px;
    border-top: 1px solid #e8f4fa;
}
.slide {
    width: 100%;
    height: 100%;
    background: linear-gradient(100deg, #eef8fe, #fafdff 40%, #f4fafe);
}
.note {
    font: bold 24px "Noto Sans CJK SC", sans-serif;
}
.note.blue {
    font: bold 23px "Liberation Sans", sans-serif;
    fill: #1818d0;
}
.shot-foot {
    height: 35px;
    flex: none;
    background: #2c9ed8;
}
.vscroll {
    width: 17px;
    flex: none;
    display: flex;
    align-items: flex-end;
    padding: 0 2px 8px;
    background: #f0f0f0;
}
.hscroll {
    display: flex;
    align-items: center;
    height: 16px;
    flex: none;
    padding: 0 18px 0 3px;
    background: #f0f0f0;
}
.hscroll .arrow {
    height: 6px;
}
.track {
    flex: 1;
    padding-left: 3px;
}
.thumb {
    width: 80%;
    height: 15px;
    background: linear-gradient(#f2f2f2, #c4c4c4);
    border: 1px solid #888;
    border-radius: 2px;
    font-size: 8px;
    line-height: 12px;
    text-align: center;
}

/* model view */
.graphics {
    flex: 1;
    min-width: 0;
    background: linear-gradient(#8fbadf 0, #b0cbe1 200px, #b9d0e5 300px, #cbd7e1 400px, #e2e4e6 560px, #e6e6e6 620px);
}
.model {
    display: block;
    width: 100%;
    height: 100%;
}
.green { fill: #308838; }
.navy { fill: #304878; }
.red { fill: #c84040; }
.blue { fill: #5078e0; }
.lower-bar {
    height: 12px;
    flex: none;
    background: #e0e0e0;
    border-top: 1px solid #888;
    overflow: hidden;
}
.lower-icons {
    display: block;
    width: 1400px;
    height: 12px;
}
.banner {
    display: flex;
    align-items: center;
    justify-content: space-between;
    height: 43px;
    flex: none;
    padding: 0 28px 0 20px;
    background: #fff;
    font-family: "DejaVu Serif", "Noto Sans CJK SC", serif;
    font-size: 38px;
    line-height: 42px;
    white-space: nowrap;
    overflow: hidden;
}

/* image viewer */
.viewer {
    position: absolute;
    left: 342px;
    right: 341px;
    top: 98px;
    bottom: 97px;
    display: flex;
    flex-direction: column;
    background: #e8e8e8;
    border: 1px solid #7899a8;
    border-bottom: none;
    border-radius: 4px 4px 0 0;
}
.viewer-title {
    display: flex;
    align-items: center;
    height: 34px;
    flex: none;
    padding: 0 0 2px 11px;
    background: #38a6d8;
    color: #fff;
    font-size: 13px;
    white-space: nowrap;
}
.wheel {
    width: 18px;
    height: 18px;
    margin-right: 6px;
}
.path {
    margin-left: 17px;
    font: bold 12px "Liberation Mono", "Noto Sans CJK SC", monospace;
}
.viewer-controls {
    display: flex;
    align-items: center;
    height: 24px;
    margin: 0 0 8px auto;
}
.viewer-controls button {
    width: 30px;
    height: 20px;
    gap: 4px;
    font-size: 12px;
}
.viewer-controls .full {
    width: 52px;
}
.viewer-controls svg {
    width: 12px;
    height: 12px;
}
.stage {
    position: relative;
    flex: 1;
    min-height: 0;
    display: grid;
    grid-template-columns: 668fr 565fr;
    margin: 42px 2px 45px 1px;
    background: linear-gradient(#92bbdf 0, #9bbce0 60px, #a8c6df 150px, #b9d0e4 260px, #ccd7e3 340px, #dadfe4 440px, #e6e6e6 540px);
    border-bottom: 2px solid #ecc498;
}
.pane {
    padding: 2px 0 0 1px;
    color: #405878;
}
.pane + .pane {
    padding-left: 4px;
    border-left: 2px solid #d8a878;
}
.pane pre {
    height: 85px;
    font-family: "Noto Sans", sans-serif;
    font-size: 13px;
    line-height: 17px;
}
.legend {
    display: flex;
    gap: 7px;
    height: 524px;
    margin-top: 45px;
}
.scale {
    width: 15px;
    display: flex;
    flex-direction: column;
    margin: 8px 0;
}
.scale i {
    flex: 1;
    border: 1px solid #dde4ea;
    border-width: 1px 1px 0;
}
.c1 { background: #ff1a00; }
.c2 { background: #ff6e00; }
.c3 { background: #ff9c00; }
.c4 { background: #fff000; }
.c5 { background: #8ee600; }
.c6 { background: #00d400; }
.c7 { background: #00e080; }
.c8 { background: #00e6ff; }
.c9 { background: #00aaff; }
.c10 { background: #0078ff; }
.c11 { background: #0040ff; }
.c12 { background: #0008ff; }
.values {
    display: flex;
    flex-direction: column;
    justify-content: space-between;
    font-size: 15px;
    line-height: 16px;
}
.unit {
    margin: 26px 0 0 7px;
    font-size: 14px;
    line-height: 17px;
}
.pane-name {
    margin-top: 3px;
    font-size: 11px;
    line-height: 17px;
    color: #f0a050;
}
.drawing {
    position: absolute;
    left: 0;
    top: 0;
    width: 100%;
    height: 100%;
}
.viewer-foot {
    display: grid;
    grid-template-columns: 1fr auto 1fr;
    align-items: center;
    height: 42px;
    flex: none;
    background: #38a6d8;
    color: #fff;
    font-size: 16px;
}
.viewer-foot button {
    width: 42px;
    height: 40px;
}
.viewer-foot .wide {
    width: 55px;
}
.viewer-foot svg {
    width: 20px;
    height: 20px;
}
.foot-tools {
    grid-column: 2;
    display: flex;
    align-items: center;
    padding-left: 29px;
}
.line {
    width: 1px;
    height: 28px;
    margin: 0 8px;
    background: #a8dcf2;
}
.foot-right {
    display: flex;
    justify-content: flex-end;
    padding-right: 10px;
}
```
